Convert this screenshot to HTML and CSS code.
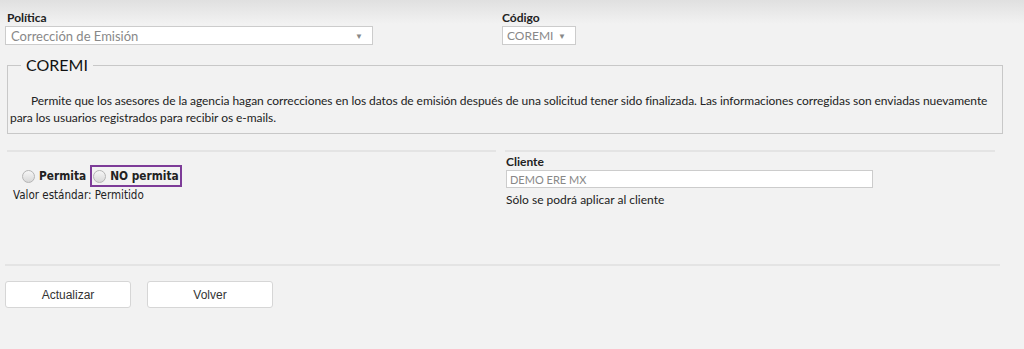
FILE: index.html
```html
<!DOCTYPE html>
<html lang="es">
<head>
    <meta charset="UTF-8">
    <title>Política - COREMI</title>
    <link rel="stylesheet" href="styles.css">
</head>
<body>
    <div class="header-row">
        <div class="field field-policy">
            <label>Política</label>
            <div class="select select-wide">
                <span>Corrección de Emisión</span>
                <span class="arrow">&#9660;</span>
            </div>
        </div>
        <div class="field field-code">
            <label>Código</label>
            <div class="select select-small">
                <span>COREMI</span>
                <span class="arrow">&#9660;</span>
            </div>
        </div>
    </div>

    <fieldset class="policy-box">
        <legend>COREMI</legend>
        <p>Permite que los asesores de la agencia hagan correcciones en los datos de emisión después de una solicitud tener sido finalizada. Las informaciones corregidas son enviadas nuevamente para los usuarios registrados para recibir os e-mails.</p>
    </fieldset>

    <div class="options">
        <div class="option-col">
            <div class="radio-row">
                <label class="radio-label"><input type="radio" name="permit"> Permita</label>
                <label class="radio-label selected"><input type="radio" name="permit"> NO permita</label>
            </div>
            <div class="default-value">Valor estándar: Permitido</div>
        </div>
        <div class="client-col">
            <label>Cliente</label>
            <input type="text" class="client-input" value="DEMO ERE MX" readonly>
            <div class="hint">Sólo se podrá aplicar al cliente</div>
        </div>
    </div>

    <div class="actions">
        <button type="button">Actualizar</button>
        <button type="button">Volver</button>
    </div>
</body>
</html>
```

FILE: styles.css
```css
body {
    margin: 0;
    min-height: 349px;
    font-family: Lato, 'Open Sans', sans-serif;
    font-size: 12px;
    color: #222;
    background: linear-gradient(#e0e0e0 0, #f2f2f2 24px) no-repeat, #f2f2f2;
}
label {
    display: block;
    font-weight: bold;
    line-height: 15px;
}
.header-row {
    display: flex;
    padding: 10px 0 0 5px;
}
.field-policy {
    width: 368px;
    margin-right: 129px;
}
.field-policy label {
    padding-left: 2px;
}
.select {
    display: flex;
    justify-content: space-between;
    align-items: center;
    height: 17px;
    margin-top: 1px;
    padding: 0 9px 0 5px;
    background-color: #fff;
    border: 1px solid #ccc;
    font-size: 13px;
    color: #888;
}
.select-small {
    width: 59px;
    padding-left: 4px;
    font-size: 12px;
}
.arrow {
    font-size: 8px;
    color: #888;
}
.policy-box {
    margin: 10px 21px 0 7px;
    padding: 0 2px;
    border: 1px solid #c8c8c8;
}
.policy-box legend {
    margin-left: 11px;
    padding: 0 5px;
    font-size: 16px;
    line-height: 20px;
    color: #111;
}
.policy-box p {
    margin: 0;
    padding: 17px 0 7px;
    text-indent: 21px;
    line-height: 17px;
    letter-spacing: -0.06px;
    color: #222;
}
.options {
    display: grid;
    grid-template-columns: 489px 490px;
    column-gap: 9px;
    margin: 16px 0 0 7px;
}
.option-col, .client-col {
    border-top: 2px solid #e4e4e4;
    min-height: 110px;
}
.option-col {
    padding-left: 6px;
}
.radio-row {
    display: flex;
    align-items: center;
    margin-top: 13px;
    padding-left: 6px;
}
.radio-label {
    display: flex;
    align-items: center;
    height: 18px;
    padding: 0 1px;
    border: 2px solid transparent;
    font-family: 'DejaVu Sans Condensed', 'DejaVu Sans', sans-serif;
    font-size: 11.8px;
}
.radio-label.selected {
    border-color: #7d3c98;
    margin-left: 1px;
}
.radio-label input {
    appearance: none;
    width: 13px;
    height: 13px;
    margin: 0 4px 0 0;
    border: 1px solid #b5b5b5;
    border-radius: 50%;
    background: linear-gradient(#f6f6f6, #d8d8d8);
}
.default-value {
    margin-top: 1px;
    font-family: 'DejaVu Sans Condensed', 'DejaVu Sans', sans-serif;
    font-size: 11.5px;
    line-height: 15px;
}
.client-col {
    padding-top: 2px;
}
.client-col label {
    padding-left: 1px;
}
.client-input {
    display: block;
    width: 367px;
    height: 18px;
    margin: 1px 0 0 1px;
    padding: 0 3px;
    box-sizing: border-box;
    border: 1px solid #ccc;
    background-color: #fff;
    font-family: inherit;
    font-size: 11px;
    color: #888;
}
.hint {
    margin-top: 4px;
    padding-left: 1px;
    line-height: 15px;
}
.actions {
    display: flex;
    gap: 16px;
    margin: 0 24px 0 5px;
    padding-top: 15px;
    border-top: 2px solid #e4e4e4;
}
button {
    width: 126px;
    height: 27px;
    background-color: #fff;
    border: 1px solid #d6d6d6;
    border-radius: 3px;
    font-family: 'Liberation Sans', Arial, sans-serif;
    font-size: 12px;
    color: #333;
}
```
